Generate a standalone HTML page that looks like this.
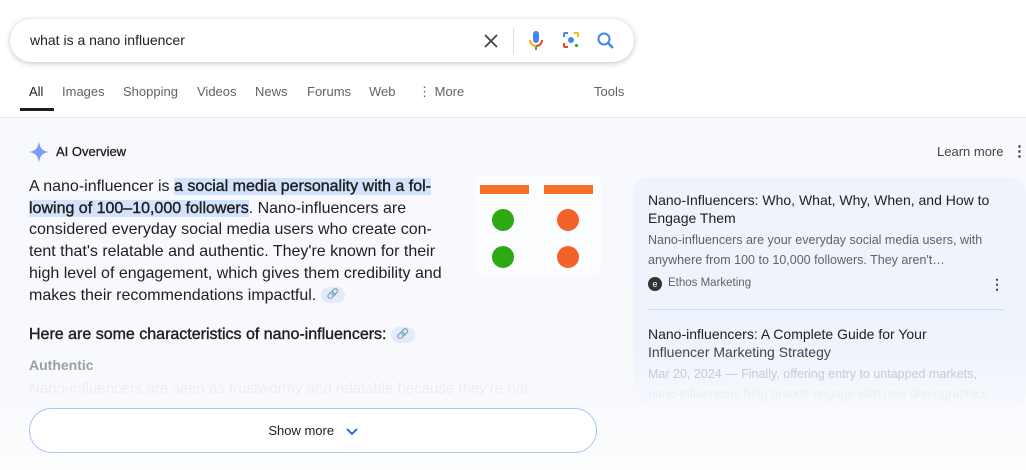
<!DOCTYPE html>
<html><head><style>
*{margin:0;padding:0;box-sizing:border-box}
body{width:1026px;height:470px;overflow:hidden;font-family:"Liberation Sans",Arial,sans-serif;background:#fff;position:relative;color:#1f1f1f}
.abs{position:absolute}
.search{left:10px;top:19px;width:624px;height:43px;border-radius:22px;background:#fff;box-shadow:0 1px 6px rgba(32,33,36,.28)}
.tab{top:84px;font-size:13px;color:#5f6368}
.ai{left:0;top:117px;width:1026px;height:353px;background:linear-gradient(#f7f9fe,#f8f9fd 70%,#fdfdff)}
.main{left:29px;top:176px;width:440px;font-size:16px;line-height:21.7px;color:#1f1f1f;white-space:nowrap}
.hl{background:#d3e3fd;-webkit-text-stroke:0.4px #1f1f1f}
.chip{display:inline-block;width:24px;height:16px;border-radius:8px;background:#e4eaf7;vertical-align:middle;text-align:center;font-size:10px;line-height:16px;color:#444}
.card{left:633px;top:177px;width:393px;height:230px;border-radius:16px;background:linear-gradient(#eef3fc 75%,rgba(246,248,254,0.6))}
</style></head><body>
<div class="abs search"></div>
<div class="abs" style="left:30px;top:32px;font-size:14px;color:#202124">what is a nano influencer</div>
<svg class="abs" style="left:482px;top:32px" width="18" height="18" viewBox="0 0 18 18"><path d="M3 3L15 15M15 3L3 15" stroke="#444" stroke-width="1.8"/></svg>
<div class="abs" style="left:513px;top:28px;width:1px;height:26px;background:#dadce0"></div>
<svg class="abs" style="left:527px;top:29px" width="18" height="24" viewBox="0 0 18 24"><rect x="6" y="2" width="6" height="12" rx="3" fill="#4285f4"/><path d="M3 11a6 6 0 0 0 12 0" stroke="#ea4335" stroke-width="2" fill="none"/><path d="M9 17v4" stroke="#34a853" stroke-width="2"/><path d="M3 11a6 6 0 0 0 6 6" stroke="#fbbc05" stroke-width="2" fill="none"/></svg>
<svg class="abs" style="left:561px;top:30px" width="20" height="20" viewBox="0 0 20 20"><path d="M3 7V4a1 1 0 0 1 1-1h3" stroke="#4285f4" stroke-width="2" fill="none"/><path d="M13 3h3a1 1 0 0 1 1 1v3" stroke="#fbbc05" stroke-width="2" fill="none"/><path d="M3 13v3a1 1 0 0 0 1 1h3" stroke="#ea4335" stroke-width="2" fill="none"/><circle cx="10" cy="10" r="3" fill="#4285f4"/><circle cx="15.5" cy="15.5" r="1.6" fill="#34a853"/></svg>
<svg class="abs" style="left:596px;top:31px" width="20" height="20" viewBox="0 0 20 20"><circle cx="8" cy="8" r="5.5" stroke="#4285f4" stroke-width="2" fill="none"/><path d="M12 12l5 5" stroke="#4285f4" stroke-width="2.4"/></svg>
<div class="abs tab" style="left:29px;color:#1f1f1f">All</div>
<div class="abs" style="left:20px;top:108px;width:34px;height:3px;background:#1f1f1f"></div>
<div class="abs tab" style="left:62px">Images</div>
<div class="abs tab" style="left:123px">Shopping</div>
<div class="abs tab" style="left:197px">Videos</div>
<div class="abs tab" style="left:255px">News</div>
<div class="abs tab" style="left:307px">Forums</div>
<div class="abs tab" style="left:369px">Web</div>
<div class="abs tab" style="left:418px">⋮ More</div>
<div class="abs tab" style="left:594px">Tools</div>
<div class="abs ai" style="border-top:1px solid #e3e6ee"></div>
<svg class="abs" style="left:29px;top:141px" width="20" height="22" viewBox="0 0 20 22"><path d="M10 0C11 7 13 10 20 11C13 12 11 15 10 22C9 15 7 12 0 11C7 10 9 7 10 0Z" fill="#7b9cf5"/></svg>
<div class="abs" style="left:56px;top:144px;font-size:13px;-webkit-text-stroke:0.3px #1f1f1f;color:#1f1f1f">AI Overview</div>
<div class="abs" style="left:937px;top:144px;font-size:13px;color:#444">Learn more</div>
<div class="abs" style="left:1012px;top:142px;font-size:15px;font-weight:bold;color:#444">⋮</div>
<div class="abs main">A nano-influencer is <span class="hl">a social media personality with a fol-</span><br><span class="hl">lowing of 100–10,000 followers</span>. Nano-influencers are<br>considered everyday social media users who create con-<br>tent that's relatable and authentic. They're known for their<br>high level of engagement, which gives them credibility and<br>makes their recommendations impactful. <span class="chip">🔗</span></div>
<div class="abs" style="left:29px;top:326px;font-size:16px;-webkit-text-stroke:0.4px #1f1f1f;color:#1f1f1f">Here are some characteristics of nano-influencers: <span class="chip" style="-webkit-text-stroke:0">🔗</span></div>
<div class="abs" style="left:29px;top:357px;font-size:14px;font-weight:bold;color:#9aa0a6">Authentic</div>
<div class="abs" style="left:29px;top:380px;font-size:15px;color:#eceef2">Nano-influencers are seen as trustworthy and relatable because they're not</div>
<div class="abs" style="left:476px;top:175px;width:125px;height:100px;background:#fcfdff;border-radius:8px"></div>
<div class="abs" style="left:480px;top:185px;width:49px;height:9px;background:#f5712a"></div>
<div class="abs" style="left:544px;top:185px;width:49px;height:9px;background:#f5712a"></div>
<div class="abs" style="left:492px;top:209px;width:22px;height:22px;border-radius:50%;background:#2ea813"></div>
<div class="abs" style="left:557px;top:209px;width:22px;height:22px;border-radius:50%;background:#f5612a"></div>
<div class="abs" style="left:492px;top:246px;width:22px;height:22px;border-radius:50%;background:#2ea813"></div>
<div class="abs" style="left:557px;top:246px;width:22px;height:22px;border-radius:50%;background:#f5612a"></div>
<div class="abs" style="left:29px;top:408px;width:568px;height:45px;border:1px solid #a8c7fa;border-radius:23px;background:#fff;text-align:center;line-height:43px;font-size:13px;color:#1f1f1f">Show more <svg style="margin-left:8px;vertical-align:-1px" width="12" height="8" viewBox="0 0 12 8"><path d="M1 1l5 5 5-5" stroke="#0b57d0" stroke-width="1.6" fill="none"/></svg></div>
<div class="abs card"></div>
<div class="abs" style="left:648px;top:191px;width:360px;font-size:14px;line-height:18px;color:#1f1f1f">Nano-Influencers: Who, What, Why, When, and How to Engage Them</div>
<div class="abs" style="left:648px;top:230px;width:360px;font-size:12.5px;line-height:20px;color:#5f6368">Nano-influencers are your everyday social media users, with anywhere from 100 to 10,000 followers. They aren't…</div>
<div class="abs" style="left:648px;top:277px;width:14px;height:14px;border-radius:50%;background:#333;color:#fff;font-size:9px;text-align:center;line-height:14px">e</div>
<div class="abs" style="left:668px;top:277px;font-size:11.5px;color:#5f6368">Ethos Marketing</div>
<div class="abs" style="left:990px;top:276px;font-size:14px;font-weight:bold;color:#444">⋮</div>
<div class="abs" style="left:647px;top:309px;width:357px;height:1px;background:#c8dbf8"></div>
<div class="abs" style="left:648px;top:325px;width:360px;font-size:14px;line-height:18px;color:#1f1f1f">Nano-influencers: A Complete Guide for Your<br><span style="color:#444">Influencer Marketing Strategy</span></div>
<div class="abs" style="left:648px;top:364px;width:360px;font-size:12.5px;line-height:20px;color:#c8cacd">Mar 20, 2024 — Finally, offering entry to untapped markets, <span style="color:#eceef0">nano-influencers help brands engage with new demographics…</span></div>
</body></html>
